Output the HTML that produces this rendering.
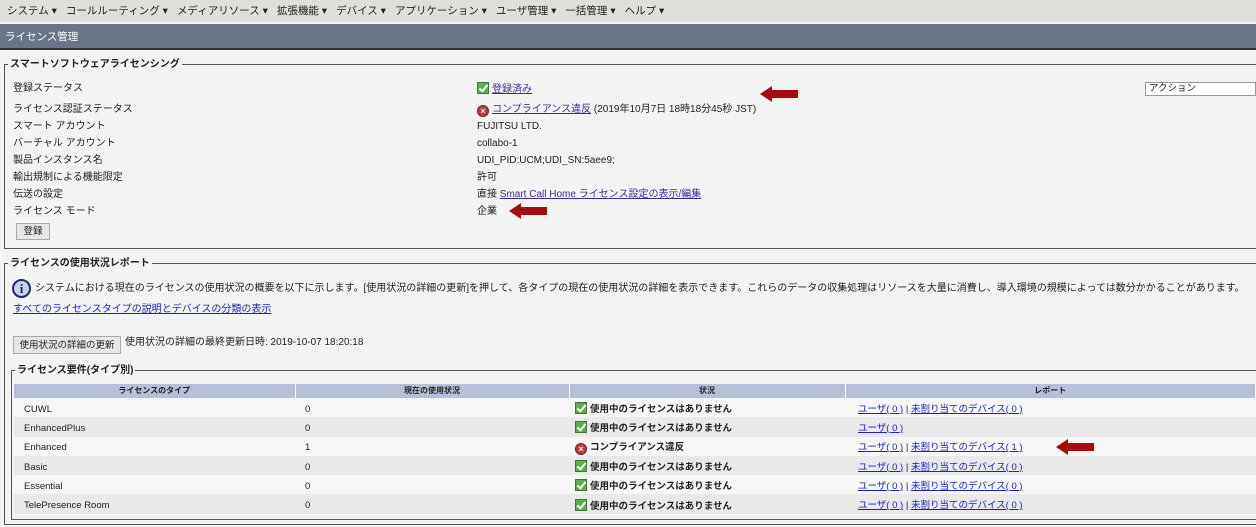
<!DOCTYPE html>
<html><head><meta charset="utf-8"><style>
*{margin:0;padding:0;box-sizing:border-box}
body{width:1256px;height:527px;overflow:hidden;background:#f3f3f3;font-family:"Liberation Sans","Noto Sans CJK JP",sans-serif;font-size:10px;line-height:13px;color:#222;position:relative}
.a{position:absolute;white-space:nowrap;line-height:13px}
#menu{position:absolute;left:0;top:0;width:1256px;height:22px;background:#e1dfd9;font-size:10.5px;line-height:13px;padding:5px 0 0 7px;color:#222}
#menu span{margin-right:9px}
#title{position:absolute;left:0;top:24px;width:1256px;height:24px;background:#6b7588;color:#fff;font-size:10.5px;line-height:13px;padding:7px 0 0 5px}
#line{position:absolute;left:0;top:48px;width:1256px;height:2px;background:#333}
.fs{position:absolute;border:1px solid #555;border-right:none}
.lg{position:absolute;background:#f3f3f3;font-weight:bold;padding:0 2px;font-size:10px;line-height:13px}
a{color:#3a2d9a;text-decoration:underline}
a.b{color:#2020c8}
.btn{position:absolute;background:#e6e6e6;border:1px solid #aaa;font-size:9.5px;text-align:center;line-height:12px}
.ok{display:inline-block;width:12px;height:12px;background:#58b048;border:1px solid #3a7a30;vertical-align:-2px;position:relative;margin-right:3px}
.ok:after{content:"";position:absolute;left:3px;top:0px;width:3px;height:7px;border:solid #fff;border-width:0 2px 2px 0;transform:rotate(40deg)}
.ng{display:inline-block;width:12px;height:12px;border-radius:50%;background:#c0393f;border:1px solid #7a1d20;vertical-align:-2px;color:#fff;font-size:9px;line-height:10px;text-align:center;font-weight:bold;margin-right:3px}
.arr{position:absolute;height:8px;background:#a50d0d}
.arr:before{content:"";position:absolute;left:-12px;top:-4px;border-right:12px solid #a50d0d;border-top:8px solid transparent;border-bottom:8px solid transparent}
table{position:absolute;left:14px;top:384px;border-collapse:collapse;width:1242px;font-size:9.5px}
th{background:#b6c0d8;height:14px;font-size:8px;line-height:10px;font-weight:bold;border-right:1px solid #fff}
td{height:19.3px;padding:3px 0 0 10px;line-height:13px;vertical-align:middle}
tr.e td{background:#e9e9e9}
tr.o td{background:#f6f6f6}
</style></head><body>
<div id="menu"><span>システム ▾</span><span>コールルーティング ▾</span><span>メディアリソース ▾</span><span>拡張機能 ▾</span><span>デバイス ▾</span><span>アプリケーション ▾</span><span>ユーザ管理 ▾</span><span>一括管理 ▾</span><span>ヘルプ ▾</span></div>
<div id="title">ライセンス管理</div>
<div id="line"></div>

<div class="fs" style="left:4px;top:64px;width:1252px;height:185px"></div>
<div class="lg" style="left:8px;top:58px">スマートソフトウェアライセンシング</div>
<div class="a" style="left:13px;top:82px">登録ステータス</div>
<div class="a" style="left:13px;top:103px">ライセンス認証ステータス</div>
<div class="a" style="left:13px;top:120px">スマート アカウント</div>
<div class="a" style="left:13px;top:137px">バーチャル アカウント</div>
<div class="a" style="left:13px;top:154px">製品インスタンス名</div>
<div class="a" style="left:13px;top:171px">輸出規制による機能限定</div>
<div class="a" style="left:13px;top:188px">伝送の設定</div>
<div class="a" style="left:13px;top:205px">ライセンス モード</div>
<div class="btn" style="left:16px;top:223px;width:34px;height:17px;padding-top:2px">登録</div>
<div class="a" style="left:477px;top:82px"><span class="ok"></span><a>登録済み</a></div>
<div class="a" style="left:477px;top:103px"><span class="ng">×</span><a>コンプライアンス違反</a> (2019年10月7日 18時18分45秒 JST)</div>
<div class="a" style="left:477px;top:120px">FUJITSU LTD.</div>
<div class="a" style="left:477px;top:137px">collabo-1</div>
<div class="a" style="left:477px;top:154px">UDI_PID:UCM;UDI_SN:5aee9;</div>
<div class="a" style="left:477px;top:171px">許可</div>
<div class="a" style="left:477px;top:188px">直接 <a>Smart Call Home ライセンス設定の表示/編集</a></div>
<div class="a" style="left:477px;top:205px">企業</div>
<div class="arr" style="left:772px;top:90px;width:26px"></div>
<div class="arr" style="left:521px;top:207px;width:26px"></div>
<div class="a" style="left:1145px;top:82px;width:111px;height:14px;border:1px solid #999;background:#fff;padding:0 0 0 3px;font-size:9.5px;line-height:12px">アクション</div>

<div class="fs" style="left:4px;top:263px;width:1252px;height:262px"></div>
<div class="lg" style="left:8px;top:257px">ライセンスの使用状況レポート</div>
<div class="a" style="left:12px;top:279px;width:19px;height:19px;border-radius:50%;background:#c8d2ee;border:2px solid #1a2a6a;font:bold 13px 'Liberation Serif',serif;text-align:center;line-height:15px;color:#1a2a6a">i</div>
<div class="a" style="left:35px;top:282px">システムにおける現在のライセンスの使用状況の概要を以下に示します。[使用状況の詳細の更新]を押して、各タイプの現在の使用状況の詳細を表示できます。これらのデータの収集処理はリソースを大量に消費し、導入環境の規模によっては数分かかることがあります。</div>
<div class="a" style="left:13px;top:303px"><a class="b">すべてのライセンスタイプの説明とデバイスの分類の表示</a></div>
<div class="btn" style="left:13px;top:336px;width:108px;height:18px;padding-top:3px">使用状況の詳細の更新</div>
<div class="a" style="left:125px;top:336px">使用状況の詳細の最終更新日時: 2019-10-07 18:20:18</div>

<div class="fs" style="left:11px;top:370px;width:1245px;height:150px"></div>
<div class="lg" style="left:15px;top:364px">ライセンス要件(タイプ別)</div>
<table>
<tr><th style="width:281px">ライセンスのタイプ</th><th style="width:274px">現在の使用状況</th><th style="width:276px">状況</th><th>レポート</th></tr>
<tr class="o"><td>CUWL</td><td>0</td><td style="padding-left:6px"><span class="ok"></span><b>使用中のライセンスはありません</b></td><td style="padding-left:13px"><a class="b">ユーザ( 0 )</a> | <a class="b">未割り当てのデバイス( 0 )</a></td></tr>
<tr class="e"><td>EnhancedPlus</td><td>0</td><td style="padding-left:6px"><span class="ok"></span><b>使用中のライセンスはありません</b></td><td style="padding-left:13px"><a class="b">ユーザ( 0 )</a></td></tr>
<tr class="o"><td>Enhanced</td><td>1</td><td style="padding-left:6px"><span class="ng">×</span><b>コンプライアンス違反</b></td><td style="padding-left:13px"><a class="b">ユーザ( 0 )</a> | <a class="b">未割り当てのデバイス( 1 )</a></td></tr>
<tr class="e"><td>Basic</td><td>0</td><td style="padding-left:6px"><span class="ok"></span><b>使用中のライセンスはありません</b></td><td style="padding-left:13px"><a class="b">ユーザ( 0 )</a> | <a class="b">未割り当てのデバイス( 0 )</a></td></tr>
<tr class="o"><td>Essential</td><td>0</td><td style="padding-left:6px"><span class="ok"></span><b>使用中のライセンスはありません</b></td><td style="padding-left:13px"><a class="b">ユーザ( 0 )</a> | <a class="b">未割り当てのデバイス( 0 )</a></td></tr>
<tr class="e"><td>TelePresence Room</td><td>0</td><td style="padding-left:6px"><span class="ok"></span><b>使用中のライセンスはありません</b></td><td style="padding-left:13px"><a class="b">ユーザ( 0 )</a> | <a class="b">未割り当てのデバイス( 0 )</a></td></tr>
</table>
<div class="arr" style="left:1068px;top:443px;width:26px"></div>
</body></html>
